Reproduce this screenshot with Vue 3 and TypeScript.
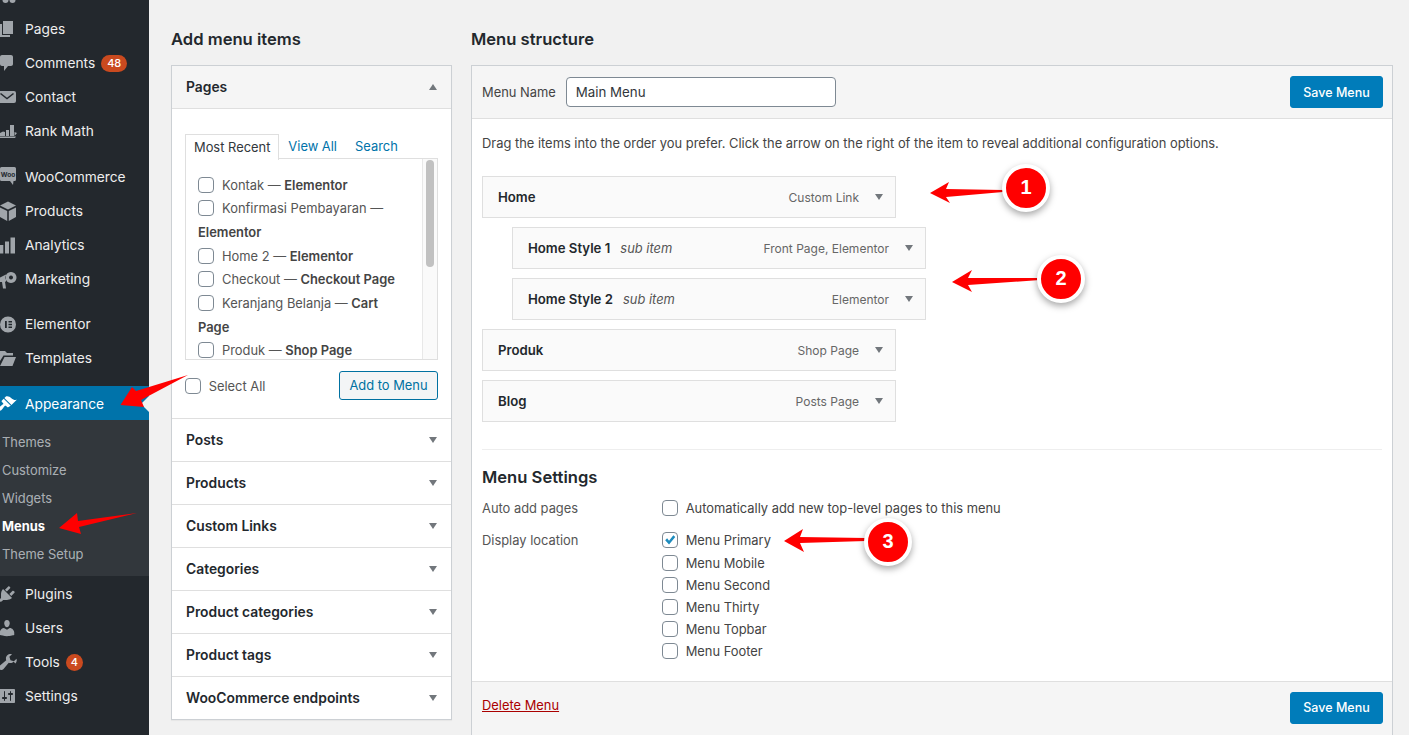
<script setup lang="ts">
interface NavItem {
  label: string
  icon: string
  badge?: string
  gap?: boolean
}

const topNav: NavItem[] = [
  { label: 'Pages', icon: 'M6 15V2h10v13H6zm-1 1h8v2H3V5h2v11z' },
  { label: 'Comments', icon: 'M5 2h9c1.100 0 2 .9 2 2v7c0 1.100-.9 2-2 2h-3l-4 5v-5H5c-1.100 0-2-.9-2-2V4c0-1.100.9-2 2-2z', badge: '48' },
  { label: 'Contact', icon: 'M3 4h14a2 2 0 0 1 2 2v8a2 2 0 0 1-2 2H3a2 2 0 0 1-2-2V6a2 2 0 0 1 2-2zm7 8.500l7-5.500-1-1-6 4.700L4 6 3 7z' },
  { label: 'Rank Math', icon: 'M3 12l3-1.500 2 .5V15H3zM9 9h3v6H9zM13 4h4v11h-4zM17.500 11l2.500 1-2.500 3zM3 15.500h16l-1 1.500H3z' },
  { label: 'WooCommerce', icon: 'woo', gap: true },
  { label: 'Products', icon: 'M11 .5l8 4-8 4-8-4zM3 6.500l7.200 3.600V20L3 16zM19 6.500V16l-7.200 4V10.100z' },
  { label: 'Analytics', icon: 'M3 10h3.300v8.500H3zM8 6.500h4v12H8zM13.500 2.500H18v16h-4.500z' },
  { label: 'Marketing', icon: 'M3 8.500L9 5.500v7l-1 .2 1 6.800H6l-1-6.500H3zM14 3a5.500 5.500 0 1 1-.01 0zM14 6.500a2 2 0 1 0 .01 0z' },
  { label: 'Elementor', icon: 'M11 2.500a8 8 0 1 0 0 16 8 8 0 0 0 0-16zM8 7h1.800v7H8zM11.500 7H15v1.500h-3.500zM11.500 9.800H15v1.500h-3.500zM11.500 12.500H15V14h-3.500z', gap: true },
  { label: 'Templates', icon: 'M3 3h5l2 2h6v2.500H6.500L3 13zM7.500 9H19l-3.500 9H3z' },
]

const bottomNav: NavItem[] = [
  { label: 'Plugins', icon: 'M13.110 4.360L9.870 7.600 8 5.730l3.240-3.240c.35-.34 1.050-.2 1.560.32.52.51.66 1.210.31 1.550zm-8 1.770l.91-1.120 9.010 9.010-1.190.84c-.71.71-2.630 1.160-3.820 1.160H6.140L4.900 17.260c-.59.59-1.540.59-2.120 0-.59-.58-.59-1.530 0-2.120l1.240-1.240v-3.880c0-1.130.46-3.050 1.090-3.890zm7.260 3.970l3.240-3.240c.34-.35 1.040-.21 1.550.31.52.51.66 1.210.31 1.550l-3.240 3.250z' },
  { label: 'Users', icon: 'M10 9.250c-2.270 0-2.730-3.440-2.730-3.440C7 4.020 7.820 2 9.970 2c2.160 0 2.980 2.020 2.710 3.810 0 0-.41 3.440-2.680 3.440zm0 2.570L12.720 10c2.390 0 4.520 2.330 4.520 4.530v2.490s-3.650 1.130-7.240 1.130c-3.650 0-7.240-1.130-7.240-1.130v-2.490c0-2.250 1.940-4.480 4.150-4.480z' },
  { label: 'Tools', icon: 'M16.680 9.770c-1.340 1.340-3.300 1.670-4.950.99l-5.410 6.520c-.99.99-2.590.99-3.580 0s-.99-2.590 0-3.570l6.520-5.420c-.68-1.650-.35-3.610.99-4.950 1.280-1.280 3.120-1.640 4.730-1.090l-2.600 2.600 1.130 3.390 3.390 1.130 2.600-2.600c.55 1.610.19 3.450-1.090 4.730z', badge: '4' },
  { label: 'Settings', icon: 'M18 16V4c0-.55-.45-1-1-1H3c-.55 0-1 .45-1 1v12c0 .55.45 1 1 1h14c.55 0 1-.45 1-1zM8 11h1c.55 0 1 .45 1 1s-.45 1-1 1H8v1.500c0 .28-.22.5-.5.5s-.5-.22-.5-.5V13H6c-.55 0-1-.45-1-1s.45-1 1-1h1V5.500c0-.28.22-.5.5-.5s.5.22.5.5V11zm5-2h-1c-.55 0-1-.45-1-1s.45-1 1-1h1V5.500c0-.28.22-.5.5-.5s.5.22.5.5V7h1c.55 0 1 .45 1 1s-.45 1-1 1h-1v5.500c0 .28-.22.5-.5.5s-.5-.22-.5-.5V9z' },
]

const brushIcon = 'M14.480 11.060L7.410 3.990l1.500-1.500c.5-.56 2.300-.47 3.510.32 1.210.8 1.430 1.280 2.910 2.100 1.180.64 2.450 1.260 4.450.85zm-.71.71L6.700 4.700 4.930 6.470c-.39.39-.39 1.020 0 1.410l1.060 1.060c.39.39.39 1.030 0 1.420-.6.6-1.430 1.110-2.210 1.690-.35.26-.7.53-1.010.84C1.430 13.710.96 15.070 1 17c1.930.04 3.290-.43 4.150-1.770.31-.31.58-.66.84-1.010.58-.78 1.090-1.610 1.690-2.210.39-.39 1.030-.39 1.420 0l1.060 1.060c.39.39 1.020.39 1.410 0z'

const subNav = ['Themes', 'Customize', 'Widgets', 'Menus', 'Theme Setup']

interface PageEntry {
  name: string
  kind: string
}

const pageEntries: PageEntry[] = [
  { name: 'Kontak', kind: 'Elementor' },
  { name: 'Konfirmasi Pembayaran', kind: 'Elementor' },
  { name: 'Home 2', kind: 'Elementor' },
  { name: 'Checkout', kind: 'Checkout Page' },
  { name: 'Keranjang Belanja', kind: 'Cart Page' },
  { name: 'Produk', kind: 'Shop Page' },
]

const sections = ['Posts', 'Products', 'Custom Links', 'Categories', 'Product categories', 'Product tags', 'WooCommerce endpoints']

interface MenuEntry {
  title: string
  type: string
  sub?: boolean
}

const menuEntries: MenuEntry[] = [
  { title: 'Home', type: 'Custom Link' },
  { title: 'Home Style 1', type: 'Front Page, Elementor', sub: true },
  { title: 'Home Style 2', type: 'Elementor', sub: true },
  { title: 'Produk', type: 'Shop Page' },
  { title: 'Blog', type: 'Posts Page' },
]

const locations = ['Menu Primary', 'Menu Mobile', 'Menu Second', 'Menu Thirty', 'Menu Topbar', 'Menu Footer']

const markers = [
  { n: 1, x: 1026, y: 188, d: 'M930 193 L949 182 L946 189 L1003 190 L1003 192 L946 197 L950 203 Z' },
  { n: 2, x: 1061, y: 279, d: 'M952 282 L972 270 L968 278 L1040 278 L1040 280 L968 285 L972 292 Z' },
  { n: 3, x: 888, y: 542, d: 'M784 541 L803 529 L800 537 L866 538 L866 541 L800 543 L804 552 Z' },
]
</script>

<template>
  <div class="page">
    <aside class="sidebar">
      <svg class="stub" viewBox="0 0 20 6" width="20" height="6" aria-hidden="true">
        <circle cx="5.500" cy="0" r="3" />
        <circle cx="12.500" cy="0" r="3" />
      </svg>
      <a
        v-for="item in topNav"
        :key="item.label"
        class="nav-item"
        :class="{ 'with-gap': item.gap }"
      >
        <svg v-if="item.icon === 'woo'" class="nav-icon" viewBox="0 0 20 20" aria-hidden="true">
          <path d="M4.500 0h13a1.500 1.500 0 0 1 1.500 1.500v11a1.500 1.500 0 0 1-1.500 1.500h-1l-.5 4-3-4H4.500A1.500 1.500 0 0 1 3 12.500v-11A1.500 1.500 0 0 1 4.500 0z" />
          <text x="11" y="9.500" class="woo-text" text-anchor="middle">Woo</text>
        </svg>
        <svg v-else class="nav-icon" viewBox="0 0 20 20" aria-hidden="true">
          <path :d="item.icon" fill-rule="evenodd" />
        </svg>
        <span>{{ item.label }}</span>
        <span v-if="item.badge" class="badge">{{ item.badge }}</span>
      </a>

      <a class="nav-item current">
        <svg class="nav-icon" viewBox="0 0 20 20" aria-hidden="true">
          <path :d="brushIcon" />
        </svg>
        <span>Appearance</span>
      </a>
      <div class="submenu">
        <a v-for="sub in subNav" :key="sub" class="sub-item" :class="{ active: sub === 'Menus' }">{{ sub }}</a>
      </div>

      <a v-for="item in bottomNav" :key="item.label" class="nav-item">
        <svg class="nav-icon" viewBox="0 0 20 20" aria-hidden="true">
          <path :d="item.icon" fill-rule="evenodd" />
        </svg>
        <span>{{ item.label }}</span>
        <span v-if="item.badge" class="badge round">{{ item.badge }}</span>
      </a>
    </aside>

    <main class="content">
      <section class="col-left">
        <h2 class="col-title">Add menu items</h2>
        <div class="accordion">
          <div class="acc-head open">
            <span>Pages</span>
            <i class="tri up"></i>
          </div>
          <div class="acc-body">
            <div class="tabs">
              <span class="tab active">Most Recent</span>
              <span class="tab">View All</span>
              <span class="tab">Search</span>
            </div>
            <div class="tab-box">
              <ul class="page-list">
                <li v-for="entry in pageEntries" :key="entry.name">
                  <input type="checkbox" class="cb" />
                  <span class="lbl">{{ entry.name }} — <b>{{ entry.kind }}</b></span>
                </li>
              </ul>
              <div class="scroll-track"><div class="scroll-thumb"></div></div>
            </div>
            <div class="acc-actions">
              <label class="select-all"><input type="checkbox" class="cb" /> Select All</label>
              <button class="btn-outline">Add to Menu</button>
            </div>
          </div>
          <div v-for="s in sections" :key="s" class="acc-head">
            <span>{{ s }}</span>
            <i class="tri"></i>
          </div>
        </div>
      </section>

      <section class="col-right">
        <h2 class="col-title">Menu structure</h2>
        <div class="editor">
          <header class="editor-head">
            <label class="name-field">
              <span>Menu Name</span>
              <input class="name-input" value="Main Menu" />
            </label>
            <button class="btn-primary">Save Menu</button>
          </header>

          <div class="editor-body">
            <p class="hint">Drag the items into the order you prefer. Click the arrow on the right of the item to reveal additional configuration options.</p>

            <div class="menu-list">
              <div v-for="entry in menuEntries" :key="entry.title" class="menu-item" :class="{ sub: entry.sub }">
                <span class="mi-title">{{ entry.title }}</span>
                <em v-if="entry.sub" class="mi-sub">sub item</em>
                <span class="mi-type">{{ entry.type }}</span>
                <i class="tri"></i>
              </div>
            </div>

            <div class="settings">
              <h3 class="settings-title">Menu Settings</h3>
              <div class="setting-row">
                <span class="setting-label">Auto add pages</span>
                <label class="opt"><input type="checkbox" class="cb" /> Automatically add new top-level pages to this menu</label>
              </div>
              <div class="setting-row locations">
                <span class="setting-label">Display location</span>
                <div class="loc-list">
                  <label v-for="(loc, i) in locations" :key="loc" class="opt">
                    <input type="checkbox" class="cb" :checked="i === 0" /> {{ loc }}
                  </label>
                </div>
              </div>
            </div>
          </div>

          <footer class="editor-foot">
            <a class="delete">Delete Menu</a>
            <button class="btn-primary">Save Menu</button>
          </footer>
        </div>
      </section>
    </main>

    <i class="current-notch"></i>

    <!-- annotations drawn on top of the screenshot -->
    <svg class="arrows" width="1409" height="735" aria-hidden="true">
      <path d="M188 375 L136 391 L132 387 L120.500 405 L144 407 L141 400 Z" />
      <path d="M137 513 L78 521 L77 513 L59 528 L81 534 L79 527 Z" />
      <path v-for="m in markers" :key="m.n" :d="m.d" />
    </svg>
    <span
      v-for="m in markers"
      :key="m.n"
      class="marker"
      :style="{ left: m.x - 24 + 'px', top: m.y - 24 + 'px' }"
    >{{ m.n }}</span>
  </div>
</template>

<style>
html,
body {
  margin: 0;
  background: #f1f1f1;
  overflow: hidden;
}
</style>

<style scoped>
.page {
  position: relative;
  display: flex;
  width: 1409px;
  height: 735px;
  overflow: hidden;
  background: #f1f1f1;
  font-family: Inter, "Liberation Sans", sans-serif;
  font-size: 12.900px;
  color: #444;
}

/* sidebar */
.sidebar {
  width: 149px;
  flex-shrink: 0;
  background: #23282d;
  padding-top: 11px;
  position: relative;
}
.stub {
  position: absolute;
  top: 0;
  left: 0;
  fill: #a0a5aa;
}
.nav-item {
  display: flex;
  align-items: center;
  box-sizing: border-box;
  height: 34px;
  padding-top: 2px;
  color: #eee;
  font-size: 13.750px;
  white-space: nowrap;
}
.nav-item.with-gap {
  margin-top: 11.500px;
}
.nav-icon {
  width: 20px;
  height: 20px;
  margin-left: -3px;
  margin-right: 8px;
  flex-shrink: 0;
  fill: #a0a5aa;
  overflow: visible;
}
.woo-text {
  font-size: 6.500px;
  font-weight: 700;
  fill: #23282d;
}
.badge {
  margin-left: 6px;
  background: #ca4a1f;
  color: #fff;
  font-size: 11px;
  font-weight: 500;
  line-height: 17px;
  padding: 0 6px;
  border-radius: 9px;
}
.badge.round {
  padding: 0;
  width: 17px;
  text-align: center;
}
.nav-item.current {
  background: #0073aa;
  color: #fff;
  margin-top: 12px;
}
.nav-item.current .nav-icon {
  fill: #fff;
}
.submenu {
  background: #32373c;
  height: 156px;
  padding-top: 8px;
  box-sizing: border-box;
}
.sub-item {
  display: flex;
  align-items: center;
  height: 28px;
  padding-left: 2px;
  color: rgba(240, 245, 250, 0.65);
  font-size: 12.900px;
}
.sub-item.active {
  color: #fff;
  font-weight: 700;
}
.current-notch {
  position: absolute;
  left: 141px;
  top: 396px;
  border: 8px solid transparent;
  border-left: 0;
  border-right-color: #f1f1f1;
}

/* content columns */
.content {
  flex: 1;
  display: flex;
  gap: 19px;
  padding: 0 16px 0 22px;
  min-width: 0;
}
.col-left {
  width: 281px;
  flex-shrink: 0;
}
.col-right {
  flex: 1;
  min-width: 0;
}
.col-title {
  margin: 0;
  height: 65px;
  line-height: 79px;
  font-size: 16.600px;
  font-weight: 600;
  color: #23282d;
}

/* accordion */
.accordion {
  background: #fff;
  border: 1px solid #ccd0d4;
  box-shadow: 0 1px 1px rgba(0, 0, 0, 0.04);
}
.acc-head {
  display: flex;
  align-items: center;
  justify-content: space-between;
  height: 42px;
  padding: 0 14px;
  border-top: 1px solid #dfdfdf;
  font-size: 13.850px;
  font-weight: 600;
  color: #23282d;
}
.acc-head.open {
  border-top: 0;
  border-bottom: 1px solid #dfdfdf;
  background: #f5f5f5;
}
.tri {
  width: 0;
  height: 0;
  border-left: 4.500px solid transparent;
  border-right: 4.500px solid transparent;
  border-top: 6px solid #72777c;
}
.tri.up {
  border-top: 0;
  border-bottom: 6px solid #72777c;
}
.acc-body {
  padding: 25px 13px 0;
  height: 309px;
  box-sizing: border-box;
}
.tabs {
  display: flex;
  height: 25px;
  position: relative;
  z-index: 1;
}
.tab {
  padding: 0 9px;
  line-height: 25px;
  color: #0073aa;
}
.tab.active {
  color: #32373c;
  background: #fff;
  border: 1px solid #dfdfdf;
  border-bottom: 0;
  height: 25px;
  padding: 0 8px;
}
.tab-box {
  display: flex;
  height: 202px;
  box-sizing: border-box;
  border: 1px solid #dfdfdf;
  margin-top: -1px;
  overflow: hidden;
}
.page-list {
  flex: 1;
  list-style: none;
  margin: 0;
  padding: 14.500px 12px 0;
  line-height: 23.700px;
  color: #555;
}
.page-list b {
  color: #444;
  font-weight: 600;
}
.cb {
  appearance: none;
  width: 16px;
  height: 16px;
  margin: 0 4px 0 0;
  border: 1px solid #7e8993;
  border-radius: 4px;
  background: #fff;
  vertical-align: -3px;
  box-sizing: border-box;
  position: relative;
  flex-shrink: 0;
}
.cb:checked::before {
  content: "";
  position: absolute;
  inset: 1px;
  background: #1e8cbe;
  clip-path: polygon(10% 52%, 26% 36%, 42% 56%, 78% 10%, 94% 24%, 42% 88%);
}
.page-list .cb {
  margin-right: 8px;
}
.scroll-track {
  width: 15px;
  flex-shrink: 0;
  border-left: 1px solid #e8e8e8;
  box-sizing: border-box;
  padding: 1px 3px 0;
  background: #fafafa;
}
.scroll-thumb {
  height: 107px;
  background: #c1c1c1;
  border-radius: 4px;
}
.acc-actions {
  display: flex;
  justify-content: space-between;
  align-items: center;
  margin-top: 11px;
  height: 29px;
}
.select-all {
  color: #555;
  padding-top: 1px;
}
.btn-outline {
  width: 99px;
  height: 29px;
  padding: 0;
  border: 1px solid #0071a1;
  border-radius: 3px;
  background: #f3f5f6;
  color: #0071a1;
  font: inherit;
}

/* menu editor */
.editor {
  height: 671px;
  display: flex;
  flex-direction: column;
  box-sizing: border-box;
  background: #fff;
  border: 1px solid #ccd0d4;
}
.editor-head,
.editor-foot {
  display: flex;
  align-items: center;
  justify-content: space-between;
  flex-shrink: 0;
  background: #f5f5f5;
  padding: 0 9px 0 10px;
}
.editor-head {
  height: 52px;
  border-bottom: 1px solid #dfdfdf;
}
.editor-foot {
  height: 51px;
  padding-bottom: 2px;
  border-top: 1px solid #dfdfdf;
  margin-top: auto;
}
.name-field {
  display: flex;
  align-items: center;
  gap: 10px;
  color: #444;
}
.name-input {
  width: 270px;
  height: 30px;
  box-sizing: border-box;
  border: 1px solid #7e8993;
  border-radius: 4px;
  padding: 0 9px;
  background: #fff;
  color: #32373c;
  font: inherit;
  font-size: 13.300px;
}
.btn-primary {
  width: 93px;
  height: 32px;
  border: 1px solid #007cba;
  border-radius: 3px;
  background: #007cba;
  color: #fff;
  font: inherit;
  font-size: 12.500px;
  font-weight: 500;
  padding: 0;
}
.editor-body {
  padding: 0 10px;
}
.hint {
  margin: 0;
  height: 57px;
  line-height: 50px;
  color: #444;
  white-space: nowrap;
}
.menu-list {
  display: flex;
  flex-direction: column;
  gap: 9px;
}
.menu-item {
  display: flex;
  align-items: center;
  box-sizing: border-box;
  width: 414px;
  height: 42px;
  padding: 0 12px 0 15px;
  background: #fafafa;
  border: 1px solid #dfdfdf;
}
.menu-item.sub {
  margin-left: 30px;
}
.mi-title {
  font-size: 13.200px;
  font-weight: 600;
  color: #23282d;
}
.mi-sub {
  margin-left: 10px;
  color: #555;
}
.mi-type {
  margin-left: auto;
  margin-right: 16px;
  font-size: 12px;
  color: #666;
}
.settings {
  margin-top: 27px;
  border-top: 1px solid #eee;
}
.settings-title {
  margin: 0;
  height: 48px;
  line-height: 54px;
  font-size: 16.600px;
  font-weight: 600;
  color: #23282d;
}
.setting-row {
  display: flex;
  height: 32px;
  align-items: flex-start;
}
.setting-row.locations {
  height: auto;
}
.setting-label {
  width: 180px;
  line-height: 22px;
  color: #555;
}
.opt {
  display: block;
  line-height: 22px;
  color: #444;
  white-space: nowrap;
}
.loc-list {
  display: flex;
  flex-direction: column;
}
.loc-list .opt:first-child {
  margin-bottom: 1px;
}
.delete {
  color: #a00;
  text-decoration: underline;
  margin-bottom: 4px;
}

/* annotations */
.arrows {
  position: absolute;
  top: 0;
  left: 0;
  fill: #f00;
  pointer-events: none;
}
.marker {
  position: absolute;
  width: 48px;
  height: 48px;
  box-sizing: border-box;
  border: 4px solid #fff;
  border-radius: 50%;
  background: #f00;
  color: #fff;
  font-family: "Liberation Sans", sans-serif;
  font-size: 20px;
  font-weight: 700;
  line-height: 39px;
  text-align: center;
  box-shadow: 0 3px 7px rgba(0, 0, 0, 0.35);
}
</style>
